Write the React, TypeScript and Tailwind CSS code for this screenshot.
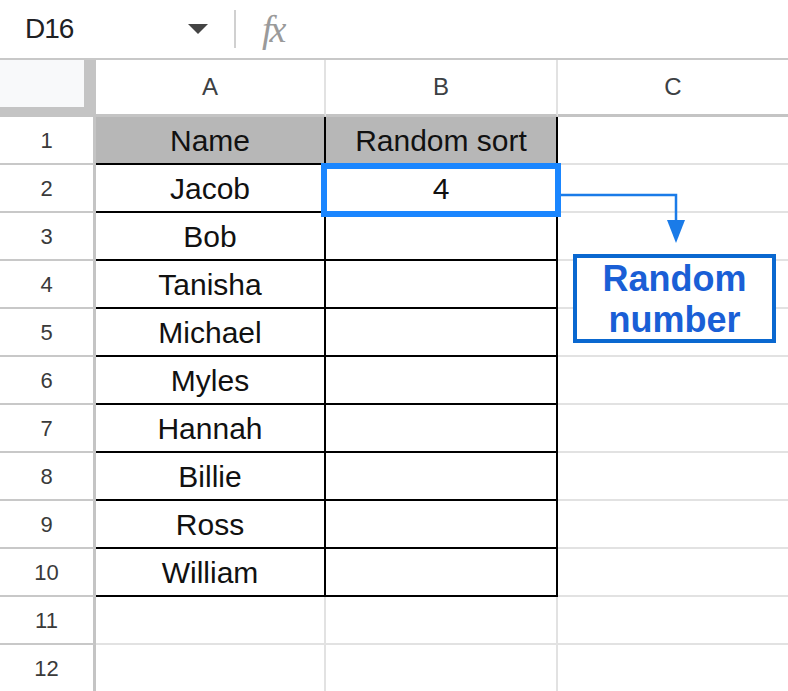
import React from 'react';

const names = ['Name', 'Jacob', 'Bob', 'Tanisha', 'Michael', 'Myles', 'Hannah', 'Billie', 'Ross', 'William', '', ''];
const values = ['Random sort', '4', '', '', '', '', '', '', '', '', '', ''];

function Row({ index }: { index: number }) {
  const inTable = index < 10;
  const isHeader = index === 0;
  return (
    <div className="flex h-[48px]">
      <div className="w-[96px] shrink-0 box-border border-r-[3px] border-r-[#c4c4c4] border-b-2 border-b-[#c8c8c8] flex items-center justify-center text-[22px] text-[#3a3a3a]">
        {index + 1}
      </div>
      <div
        className={
          inTable
            ? `w-[230px] shrink-0 box-border border-r-2 border-b-2 border-r-black border-b-black flex items-center justify-center text-[30px] text-[#111] ${isHeader ? 'bg-[#b7b7b7]' : 'bg-white'}`
            : 'w-[230px] shrink-0 box-border border-r-2 border-b-2 border-r-[#e2e2e2] border-b-[#e2e2e2]'
        }
      >
        {names[index]}
      </div>
      <div
        className={
          inTable
            ? `w-[232px] shrink-0 box-border border-r-2 border-b-2 border-r-black border-b-black flex items-center justify-center text-[30px] text-[#111] ${isHeader ? 'bg-[#b7b7b7]' : 'bg-white'}`
            : 'w-[232px] shrink-0 box-border border-r-2 border-b-2 border-r-[#e2e2e2] border-b-[#e2e2e2]'
        }
      >
        {values[index]}
      </div>
      <div className="flex-1 box-border border-b-2 border-b-[#e2e2e2]" />
    </div>
  );
}

export default function App() {
  return (
    <div className="relative w-[788px] h-[691px] overflow-hidden bg-white font-['Liberation_Sans',Arial,sans-serif]">
      {/* name box / formula bar */}
      <div className="h-[60px] box-border border-b-2 border-b-[#c8c8c8] flex items-center">
        <div className="w-[182px] pl-[25px] text-[28px] text-[#202124] tracking-[-1px]">D16</div>
        <svg width="20" height="10" viewBox="0 0 20 10" className="ml-[6px]">
          <path d="M0 0 L20 0 L10 10 Z" fill="#444" />
        </svg>
        <div className="ml-[26px] w-[2px] h-[38px] bg-[#d0d0d0]" />
        <div className="ml-[26px] text-[38px] italic text-[#9a9a9a] font-['Liberation_Serif',serif] tracking-[-3px] leading-none">fx</div>
      </div>

      {/* column headers */}
      <div className="flex h-[57px]">
        <div className="w-[96px] shrink-0 flex flex-col">
          <div className="flex flex-1">
            <div className="flex-1 bg-[#f8f9fa]" />
            <div className="w-[12px] bg-[#c4c4c4]" />
          </div>
          <div className="h-[10px] bg-[#c4c4c4]" />
        </div>
        {['A', 'B', 'C'].map((l, i) => (
          <div
            key={l}
            className={
              i === 0
                ? 'w-[230px] shrink-0 box-border border-r-2 border-r-[#e2e2e2] border-b-[3px] border-b-[#c4c4c4] flex items-center justify-center text-[24px] text-[#3c4043]'
                : i === 1
                ? 'w-[232px] shrink-0 box-border border-r-2 border-r-[#e2e2e2] border-b-[3px] border-b-[#c4c4c4] flex items-center justify-center text-[24px] text-[#3c4043]'
                : 'flex-1 box-border border-b-[3px] border-b-[#c4c4c4] flex items-center justify-center text-[24px] text-[#3c4043]'
            }
          >
            {l}
          </div>
        ))}
      </div>

      {/* rows */}
      {names.map((_, i) => (
        <Row key={i} index={i} />
      ))}

      {/* selected cell B2 */}
      <div className="absolute left-[321px] top-[163px] w-[240px] h-[54px] box-border border-[6px] border-[#1a86ff]" />

      {/* connector arrow */}
      <svg className="absolute left-0 top-0" width="788" height="691" viewBox="0 0 788 691">
        <path d="M561 195 H676 V222" fill="none" stroke="#1a7be8" strokeWidth="2.5" />
        <path d="M667 220 L685 220 L676 243 Z" fill="#1a7be8" />
      </svg>

      {/* annotation */}
      <div className="absolute left-[573px] top-[254px] w-[203px] h-[89px] box-border border-4 border-[#0a68d0] bg-white flex flex-col items-center justify-center text-[36px] leading-[41px] font-bold text-[#1a5fd6]">
        <span>Random</span>
        <span>number</span>
      </div>
    </div>
  );
}
